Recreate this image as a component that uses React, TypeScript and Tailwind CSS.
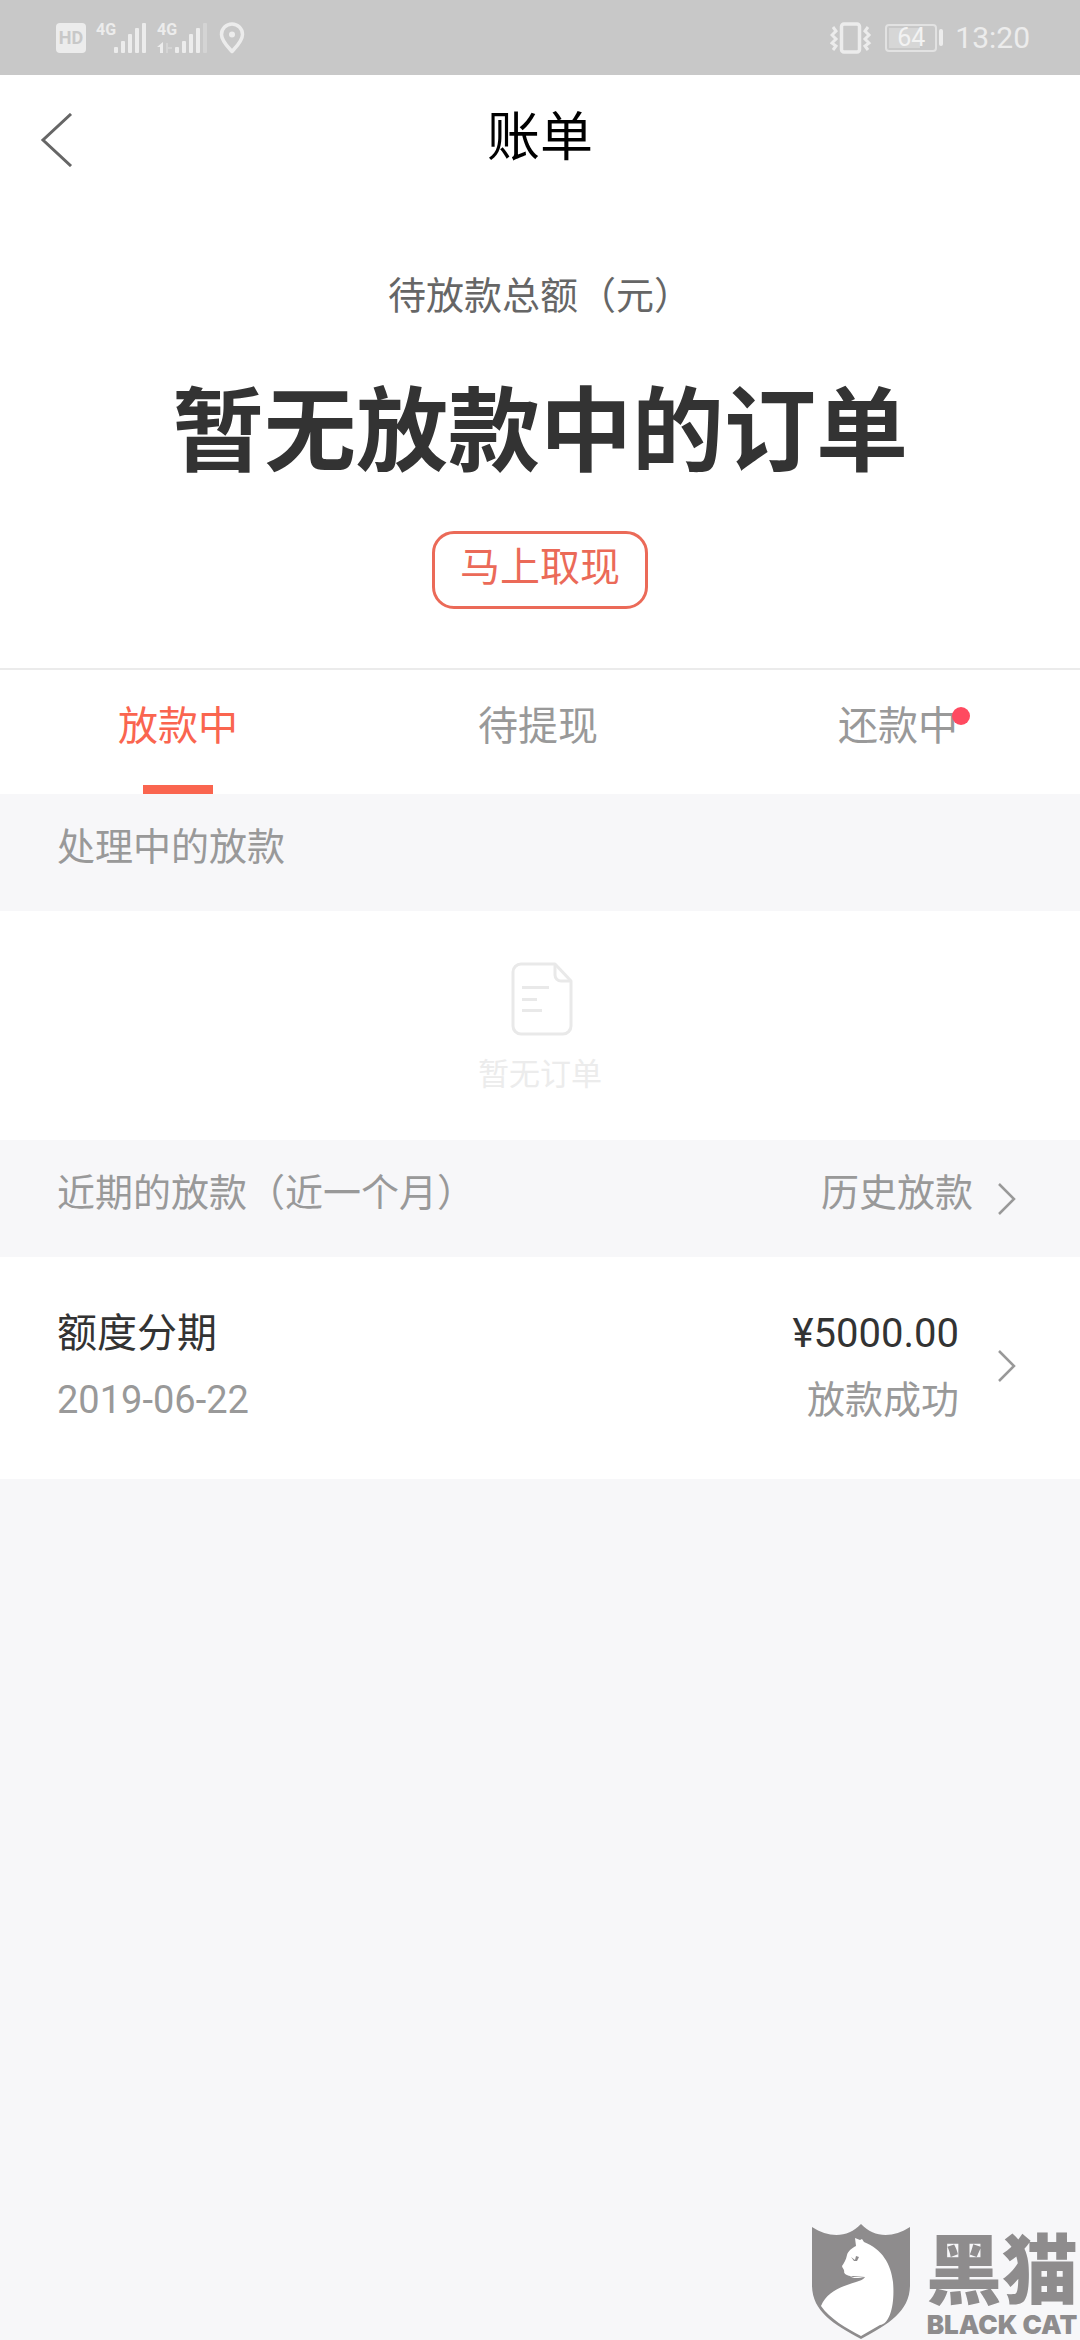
import React from "react";

function Signal({ faintLast = false, arrow = false }: { faintLast?: boolean; arrow?: boolean }) {
  return (
    <div className="relative h-8 w-[50px] shrink-0">
      <span className="absolute top-0 left-0 text-[16px] leading-4 font-bold">4G</span>
      <svg viewBox="0 0 50 32" className="h-8 w-[50px]" fill="currentColor" aria-hidden="true">
        {arrow && (
          <>
            <path d="M6 20v11H3v-6H0z" />
            <path d="M9 21h2v10H9zM11 25h4v2h-4z" opacity=".35" />
          </>
        )}
        <rect x="18" y="25" width="4" height="6" rx="1" />
        <rect x="25" y="19" width="4" height="12" rx="1" />
        <rect x="32" y="12" width="4" height="19" rx="1" />
        <rect x="39" y="6" width="4" height="25" rx="1" />
        <rect x="46" y="1" width="4" height="30" rx="1" opacity={faintLast ? 0.35 : 1} />
      </svg>
    </div>
  );
}

function StatusBar() {
  return (
    <div className="flex h-[75px] items-center justify-between bg-[#c8c8c8] pr-[50px] pl-14 text-[#ececec]">
      <div className="flex items-center">
        <span className="flex h-[30px] w-[30px] items-center justify-center rounded bg-[#ececec] text-[18px] leading-none font-bold text-[#c8c8c8]">
          HD
        </span>
        <div className="ml-[10px] flex gap-[11px]">
          <Signal />
          <Signal faintLast arrow />
        </div>
        <svg viewBox="0 0 26 32" className="ml-3 h-8 w-[26px]" aria-hidden="true">
          <path
            d="M13 29.500C9 25 2.500 19 2.500 12.500a10.500 10.500 0 0 1 21 0C23.500 19 17 25 13 29.500z"
            fill="none"
            stroke="currentColor"
            strokeWidth="3.500"
            strokeLinejoin="round"
          />
          <circle cx="13" cy="12.500" r="3" fill="currentColor" />
        </svg>
      </div>
      <div className="flex items-center">
        <svg viewBox="0 0 42 32" className="h-8 w-[42px]" fill="none" stroke="currentColor" aria-hidden="true">
          <rect x="11.500" y="2" width="18" height="28" rx="2.500" strokeWidth="3.500" />
          <path d="M3 5l3 4-4 4 4 4-4 4 4 3-3 4M38 5l-3 4 4 4-4 4 4 4-4 3 3 4" strokeWidth="3" />
        </svg>
        <div className="relative ml-[13px] flex h-7 w-[52px] items-center justify-center rounded border-2 border-[#e2e2e2]">
          <span className="absolute inset-y-[2px] left-[2px] w-[31px] bg-[#d6d6d6]" />
          <span className="relative text-[25px] leading-none text-[#f2f2f2]">64</span>
        </div>
        <span className="ml-[2px] h-[17px] w-1 rounded-sm bg-current" />
        <span className="ml-3 text-[30px] leading-none">13:20</span>
      </div>
    </div>
  );
}

function ChevronRight() {
  return (
    <svg viewBox="0 0 20 34" className="h-[34px] w-5 shrink-0" fill="none" stroke="#999" strokeWidth="2.500" aria-hidden="true">
      <path d="M2 2l15 15L2 32" />
    </svg>
  );
}

function EmptyIcon() {
  return (
    <svg viewBox="0 0 62 74" className="h-[74px] w-[62px]" fill="none" stroke="#e9e9e9" strokeWidth="3" aria-hidden="true">
      <path d="M44 2H10a8 8 0 0 0-8 8v54a8 8 0 0 0 8 8h42a8 8 0 0 0 8-8V19z" strokeLinejoin="round" />
      <path d="M44 2v11a6 6 0 0 0 6 6h10M11 25.500h27M11 37.500h15M11 48.500h20" />
    </svg>
  );
}

function Tab({ label, active = false, dot = false }: { label: string; active?: boolean; dot?: boolean }) {
  return (
    <button
      role="tab"
      aria-selected={active}
      className={
        active
          ? "flex h-[124px] flex-1 flex-col items-center justify-between pt-[27px] pr-1 text-[40px] leading-[60px] text-[#fa654f]"
          : "flex h-[124px] flex-1 flex-col items-center justify-between pt-[27px] pr-1 text-[40px] leading-[60px] text-[#999]"
      }
    >
      <span className="relative">
        {label}
        {dot && <span className="absolute top-[10px] -right-3 h-[18px] w-[18px] rounded-full bg-[#ff4a60]" />}
      </span>
      {active && <span className="h-[9px] w-[70px] bg-[#fa654f]" />}
    </button>
  );
}

function Watermark() {
  return (
    <div className="absolute right-0 bottom-0 flex items-end gap-4 text-[#8e8c8d]" aria-label="黑猫 BLACK CAT">
      <svg viewBox="0 0 98 116" className="h-[116px] w-[98px]" aria-hidden="true">
        <path
          d="M0 3C17 14 36 14 49 0c13 14 32 14 49 3v58c0 26-21 39-49 54C21 100 0 87 0 61z"
          fill="currentColor"
        />
        <path
          d="M43 14l5 2 2-1 2 3c18 7 27 22 29 40 2 22-3 42-13 43L49 112C34 104 18 95 9 82c6-15 22-20 35-24 4-1 8-3 9-5-7 1-12 2-15-1-3-1-5-1-6-4 1-2-2-4-2-6 2-3 4-6 5-11 1-4 5-7 9-9z"
          fill="#fff"
        />
        <path d="M53 53H38l3-1zM39 33l4 3 1-4 3 1-2 4h-3z" fill="currentColor" />
      </svg>
      <div className="flex flex-col items-center pr-[2px]">
        <span className="text-[76px] leading-[76px] font-black">黑猫</span>
        <span className="font-[Inter] text-[26px] leading-[30px] font-black">BLACK CAT</span>
      </div>
    </div>
  );
}

export default function App() {
  return (
    <div className="relative min-h-screen w-full bg-[#f7f7f9] font-[Roboto,'Noto_Sans_CJK_SC',sans-serif]" lang="zh-CN">
      <StatusBar />

      <div className="border-b-2 border-[#ebebeb] bg-white">
        <header className="grid grid-cols-[100px_1fr_100px] items-center pt-[21px]">
          <button aria-label="返回" className="flex h-[84px] items-center pt-1 pl-10">
            <svg viewBox="0 0 34 54" className="h-[54px] w-[34px]" fill="none" stroke="#666" strokeWidth="3" aria-hidden="true">
              <path d="M31 1L3 27l28 26" />
            </svg>
          </button>
          <h1 className="text-center text-[53px] leading-[84px] text-black">账单</h1>
        </header>

        <section className="flex flex-col items-center pt-[88px] pb-[59px]">
          <p className="text-[38px] leading-[56px] text-[#666]">待放款总额（元）</p>
          <p className="mt-10 text-[92px] leading-[138px] font-bold text-[#333]">暂无放款中的订单</p>
          <button className="mt-[29px] h-[78px] w-[216px] rounded-[22px] border-3 border-[#eb6a58] pb-1 text-[40px] leading-[64px] text-[#eb6a58]">
            马上取现
          </button>
        </section>
      </div>

      <div role="tablist" className="flex bg-white">
        <Tab label="放款中" active />
        <Tab label="待提现" />
        <Tab label="还款中" dot />
      </div>

      <h2 className="h-[117px] px-[57px] pt-[25px] text-[38px] leading-[56px] text-[#999]">处理中的放款</h2>

      <div className="flex h-[229px] flex-col items-center bg-white pt-[51px]">
        <div className="pl-[3px]">
          <EmptyIcon />
        </div>
        <p className="mt-4 text-[31px] leading-[46px] text-[#ececec]">暂无订单</p>
      </div>

      <div className="flex h-[117px] items-start justify-between pr-[63px] pl-[57px] pt-[25px] text-[38px] leading-[56px] text-[#999]">
        <h2>近期的放款（近一个月）</h2>
        <a href="#history" className="flex items-center gap-6">
          历史放款
          <span className="pt-3">
            <ChevronRight />
          </span>
        </a>
      </div>

      <a href="#order" className="flex h-[222px] items-center bg-white pr-[63px] pb-1 pl-[57px]">
        <div className="flex flex-1 flex-col gap-2 text-[#999]">
          <span className="text-[40px] leading-[60px] text-[#333]">额度分期</span>
          <span className="text-[38px] leading-[56px]">2019-06-22</span>
        </div>
        <div className="mr-[38px] flex flex-col items-end gap-2 text-[#999]">
          <span className="text-[40px] leading-[60px] text-[#333]">¥5000.00</span>
          <span className="text-[38px] leading-[56px]">放款成功</span>
        </div>
        <ChevronRight />
      </a>

      <Watermark />
    </div>
  );
}
